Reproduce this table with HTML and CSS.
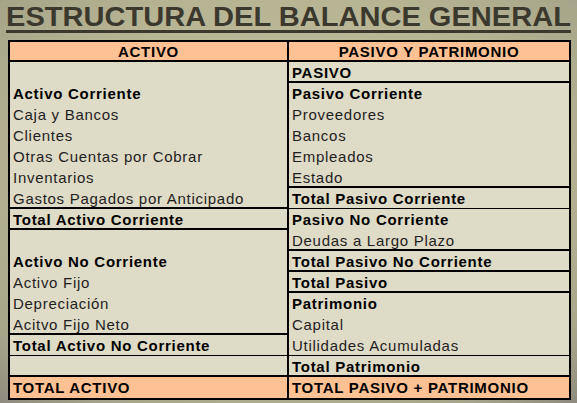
FILE: index.html
```html
<!DOCTYPE html>
<html lang="es">
<head>
<meta charset="utf-8">
<title>Estructura del Balance General</title>
<link rel="stylesheet" href="styles.css">
</head>
<body>
<div class="page">
  <h1 class="title">ESTRUCTURA DEL BALANCE GENERAL</h1>
  <div class="sheet">
    <div class="col left">
      <div class="row head">ACTIVO</div>
      <div class="row"></div>
      <div class="row b">Activo Corriente</div>
      <div class="row">Caja y Bancos</div>
      <div class="row">Clientes</div>
      <div class="row">Otras Cuentas por Cobrar</div>
      <div class="row">Inventarios</div>
      <div class="row line">Gastos Pagados por Anticipado</div>
      <div class="row b line">Total Activo Corriente</div>
      <div class="row"></div>
      <div class="row b">Activo No Corriente</div>
      <div class="row">Activo Fijo</div>
      <div class="row">Depreciación</div>
      <div class="row line">Acitvo Fijo Neto</div>
      <div class="row b thin">Total Activo No Corriente</div>
      <div class="row line"></div>
      <div class="row b total">TOTAL ACTIVO</div>
    </div>
    <div class="col right">
      <div class="row head">PASIVO Y PATRIMONIO</div>
      <div class="row b line">PASIVO</div>
      <div class="row b">Pasivo Corriente</div>
      <div class="row">Proveedores</div>
      <div class="row">Bancos</div>
      <div class="row">Empleados</div>
      <div class="row line">Estado</div>
      <div class="row b thin">Total Pasivo Corriente</div>
      <div class="row b">Pasivo No Corriente</div>
      <div class="row line">Deudas a Largo Plazo</div>
      <div class="row b line">Total Pasivo No Corriente</div>
      <div class="row b line">Total Pasivo</div>
      <div class="row b">Patrimonio</div>
      <div class="row">Capital</div>
      <div class="row thin">Utilidades Acumuladas</div>
      <div class="row b line">Total Patrimonio</div>
      <div class="row b total">TOTAL PASIVO + PATRIMONIO</div>
    </div>
  </div>
</div>
</body>
</html>
```
FILE: styles.css
```css
html, body {
  margin: 0;
  padding: 0;
}
body {
  width: 577px;
  height: 403px;
  overflow: hidden;
  background: radial-gradient(ellipse 78% 82% at 50% 42%, #c0be9f 0%, #b6b493 55%, #a8a68a 80%, #85847a 100%);
  font-family: "Liberation Sans", Arial, sans-serif;
}
.page {
  display: flex;
  flex-direction: column;
  padding: 0 6px 0 8px;
}
.title {
  align-self: flex-start;
  margin: 0 0 0 -2px;
  height: 40px;
  box-sizing: border-box;
  padding-top: 3px;
  font-size: 27px;
  line-height: 28px;
  font-weight: bold;
  color: #3b392e;
  text-decoration: underline;
  text-decoration-thickness: 2.5px;
  text-underline-offset: 4px;
  white-space: nowrap;
  transform: scaleX(1.076);
  transform-origin: 0 0;
}
.sheet {
  display: grid;
  grid-template-columns: 279px 1fr;
  width: 563px;
  box-sizing: border-box;
  border: 2px solid #000;
  background: #dedbc6;
}
.col {
  display: flex;
  flex-direction: column;
}
.left {
  border-right: 2px solid #000;
}
.row {
  height: 21px;
  box-sizing: border-box;
  padding-left: 3px;
  font-size: 15px;
  line-height: 21px;
  letter-spacing: 0.72px;
  color: #1e1e1e;
  white-space: nowrap;
}
.head {
  height: 20px;
  line-height: 19px;
  background: #fdc193;
  border-bottom: 2px solid #000;
  text-align: center;
  font-weight: bold;
  color: #000;
  padding-left: 0;
}
.b {
  font-weight: bold;
  color: #000;
}
.line {
  border-bottom: 2px solid #000;
}
.thin {
  border-bottom: 1px solid #000;
}
.total {
  background: #fdc193;
}
```
